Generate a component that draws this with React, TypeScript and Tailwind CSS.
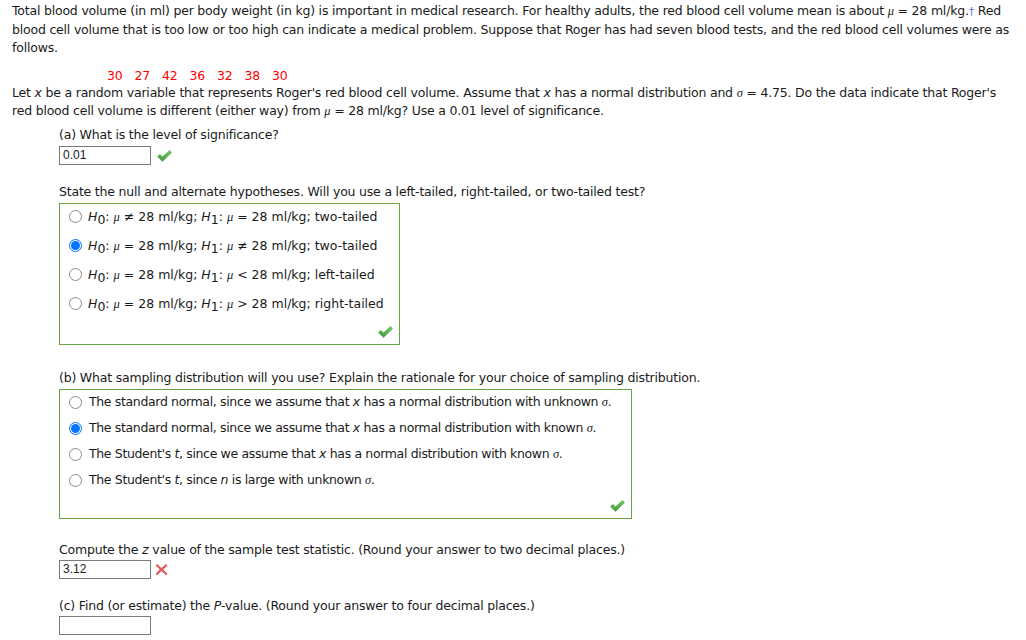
import React from "react";

const Mu = () => <span className="italic" style={{ fontFamily: '"Liberation Serif", serif' }}>μ</span>;
const Sigma = () => <span className="italic" style={{ fontFamily: '"Liberation Serif", serif' }}>σ</span>;
const I = ({ children }: { children: React.ReactNode }) => <span className="italic">{children}</span>;
const H = ({ n }: { n: string }) => (
  <span>
    <span className="italic">H</span>
    <span className="relative top-[3px]">{n}</span>
  </span>
);

const Check = () => (
  <svg width="17" height="14" viewBox="0 0 17 14">
    <defs>
      <linearGradient id="cg" x1="0" y1="0" x2="0" y2="1">
        <stop offset="0" stopColor="#7cc46f" />
        <stop offset="1" stopColor="#3f9a3a" />
      </linearGradient>
    </defs>
    <path d="M1 7.5 L3.8 5 L6.5 7.6 L13.5 1 L16 3.6 L6.5 12.8 Z" fill="url(#cg)" />
  </svg>
);

const Cross = () => (
  <svg width="13" height="13" viewBox="0 0 13 13">
    <path d="M2 1 L6.5 5 L11 1 L12.5 2.5 L8.2 6.5 L12.5 10.8 L11 12.2 L6.5 8 L2 12.2 L0.6 10.8 L4.8 6.5 L0.6 2.5 Z" fill="#e8585b" />
  </svg>
);

const Input = ({ value }: { value?: string }) => (
  <div
    className="w-[92px] h-[19px] border border-[#7a7a7a] bg-white pl-[3px] text-[12px] leading-[17px] tracking-normal text-[#222]"
    style={{ fontFamily: '"Liberation Sans", Arial, sans-serif' }}
  >
    {value}
  </div>
);

const Radio = ({ checked }: { checked?: boolean }) => (
  <span className="inline-flex w-[13px] h-[13px] shrink-0 items-center justify-center">
    {checked ? (
      <span className="w-[13px] h-[13px] rounded-full border border-[#0075ff] flex items-center justify-center bg-white">
        <span className="w-[9px] h-[9px] rounded-full bg-[#0075ff]" />
      </span>
    ) : (
      <span className="w-[13px] h-[13px] rounded-full border border-[#8a8a8a] bg-white" />
    )}
  </span>
);

export default function App() {
  return (
    <div
      className="w-[1026px] h-[640px] overflow-hidden bg-white pl-[12px] pr-[16px] pt-[2px] text-[12.5px] leading-[18px] tracking-[-0.2px] text-[#1a1a1a]"
      style={{ fontFamily: '"DejaVu Sans", Verdana, sans-serif' }}
    >
      <p>
        Total blood volume (in ml) per body weight (in kg) is important in medical research. For healthy adults, the red blood cell volume mean is about <Mu /> = 28 ml/kg.<span className="text-[#5b6cf0] text-[11px]">†</span> Red blood cell volume that is too low or too high can indicate a medical problem. Suppose that Roger has had seven blood tests, and the red blood cell volumes were as follows.
      </p>
      <div className="mt-[10px] ml-[95px] flex gap-[12px] text-[#ff0000]">
        <span>30</span>
        <span>27</span>
        <span>42</span>
        <span>36</span>
        <span>32</span>
        <span>38</span>
        <span>30</span>
      </div>
      <p className="mt-[-1px]">
        Let <I>x</I> be a random variable that represents Roger's red blood cell volume. Assume that <I>x</I> has a normal distribution and <Sigma /> = 4.75. Do the data indicate that Roger's red blood cell volume is different (either way) from <Mu /> = 28 ml/kg? Use a 0.01 level of significance.
      </p>
      <div className="ml-[47px]">
        <div className="mt-[6px]">(a) What is the level of significance?</div>
        <div className="mt-[2px] flex items-center gap-[5px]">
          <Input value="0.01" />
          <Check />
        </div>
        <div className="mt-[18px]">State the null and alternate hypotheses. Will you use a left-tailed, right-tailed, or two-tailed test?</div>
        <div className="mt-[2px] w-[341px] border border-[#6aa33f] tracking-normal">
          {[
            <><H n="0" />: <Mu /> ≠ 28 ml/kg; <H n="1" />: <Mu /> = 28 ml/kg; two-tailed</>,
            <><H n="0" />: <Mu /> = 28 ml/kg; <H n="1" />: <Mu /> ≠ 28 ml/kg; two-tailed</>,
            <><H n="0" />: <Mu /> = 28 ml/kg; <H n="1" />: <Mu /> &lt; 28 ml/kg; left-tailed</>,
            <><H n="0" />: <Mu /> = 28 ml/kg; <H n="1" />: <Mu /> &gt; 28 ml/kg; right-tailed</>,
          ].map((c, i) => (
            <div key={i} className="h-[29px] flex items-center pl-[9px] pb-[4px] gap-[6px] whitespace-nowrap">
              <Radio checked={i === 1} />
              <span>{c}</span>
            </div>
          ))}
          <div className="h-[24px] flex items-center justify-end pr-[5px]">
            <Check />
          </div>
        </div>
        <div className="mt-[24px]">(b) What sampling distribution will you use? Explain the rationale for your choice of sampling distribution.</div>
        <div className="mt-[2px] w-[573px] border border-[#6aa33f] tracking-[-0.35px]">
          {[
            <>The standard normal, since we assume that <I>x</I> has a normal distribution with unknown <Sigma />.</>,
            <>The standard normal, since we assume that <I>x</I> has a normal distribution with known <Sigma />.</>,
            <>The Student's <I>t</I>, since we assume that <I>x</I> has a normal distribution with known <Sigma />.</>,
            <>The Student's <I>t</I>, since <I>n</I> is large with unknown <Sigma />.</>,
          ].map((c, i) => (
            <div key={i} className="h-[26px] flex items-center pl-[9px] pb-[2px] gap-[7px] whitespace-nowrap">
              <Radio checked={i === 1} />
              <span>{c}</span>
            </div>
          ))}
          <div className="h-[24px] flex items-center justify-end pr-[5px]">
            <Check />
          </div>
        </div>
        <div className="mt-[22px]">Compute the <I>z</I> value of the sample test statistic. (Round your answer to two decimal places.)</div>
        <div className="mt-[1px] flex items-center gap-[4px]">
          <Input value="3.12" />
          <Cross />
        </div>
        <div className="mt-[18px]">(c) Find (or estimate) the <I>P</I>-value. (Round your answer to four decimal places.)</div>
        <div className="mt-[1px]">
          <Input />
        </div>
      </div>
    </div>
  );
}
